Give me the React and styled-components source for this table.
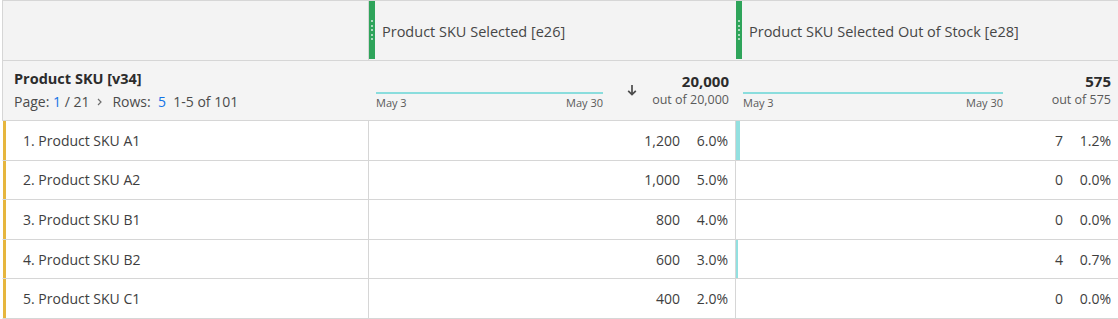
import React from "react";
import styled, { createGlobalStyle } from "styled-components";

const Global = createGlobalStyle`
  html, body { margin: 0; padding: 0; background: #fff; }
  body { font-family: "Open Sans", "Noto Sans", sans-serif; color: #4b4b4b; }
`;

const Table = styled.div`
  width: 1116px;
  margin-left: 2px;
  font-size: 14px;
`;

const Row = styled.div`
  display: grid;
  grid-template-columns: 366px 367px 1fr;
  box-sizing: border-box;
  border-left: 1px solid ${(p) => (p.$data ? "#fff" : "#d6d6d6")};
  border-bottom: 1px solid #d6d6d6;
  border-top: ${(p) => (p.$top ? "1px solid #d6d6d6" : "none")};
  background: ${(p) => p.$bg || "#fff"};
  height: ${(p) => p.$h};
`;

const EmptyHead = styled.div`
  border-right: 1px solid #d6d6d6;
`;

const ColHead = styled.div`
  display: flex;
  align-items: flex-start;
  height: 100%;
`;

const Handle = styled.div`
  width: 6px;
  height: 58px;
  background: #2ea45a;
  display: flex;
  flex-direction: column;
  align-items: center;
  gap: 2.5px;
  padding-top: 19px;
  box-sizing: border-box;
  flex-shrink: 0;
`;

const Dot = styled.span`
  width: 2px;
  height: 2px;
  border-radius: 50%;
  background: rgba(255, 255, 255, 0.8);
`;

const HeadTitle = styled.div`
  padding-left: 7px;
  font-size: 14.5px;
  color: #464646;
  line-height: 20px;
  margin-top: 21px;
`;

const DimCell = styled.div`
  padding: 8px 0 0 11px;
`;

const DimTitle = styled.div`
  font-weight: 700;
  font-size: 14.5px;
  color: #2c2c2c;
  line-height: 20px;
`;

const Pager = styled.div`
  display: flex;
  align-items: center;
  font-size: 14px;
  line-height: 19px;
  margin-top: 3px;
  color: #4b4b4b;
  white-space: pre;
`;

const Blue = styled.span`
  color: #1473e6;
`;

const Chevron = styled.svg`
  margin: 0 10px 0 8px;
`;

const MetricHead = styled.div`
  display: flex;
  align-items: flex-start;
  padding: 0 7px;
`;

const Spark = styled.div`
  width: ${(p) => p.$w}px;
  margin-top: 31px;
  flex-shrink: 0;
`;

const SparkLine = styled.div`
  height: 2px;
  background: #8adddd;
`;

const SparkLabels = styled.div`
  display: flex;
  justify-content: space-between;
  font-size: 11px;
  line-height: 14px;
  margin-top: 2px;
  color: #5a5a5a;
`;

const SortArrow = styled.svg`
  margin: 23px 0 0 24px;
  flex-shrink: 0;
`;

const Totals = styled.div`
  margin-left: auto;
  text-align: right;
  padding-top: 11px;
`;

const TotalNum = styled.div`
  font-weight: 700;
  font-size: 15px;
  line-height: 19px;
  color: #2c2c2c;
`;

const TotalOf = styled.div`
  font-size: 12.5px;
  line-height: 17px;
  color: #5a5a5a;
`;

const NameCell = styled.div`
  border-left: 3px solid #e6b63e;
  border-right: 1px solid #d6d6d6;
  display: flex;
  align-items: center;
  padding-left: 17px;
  font-size: 14px;
  color: #3e3e3e;
`;

const ValueCell = styled.div`
  position: relative;
  display: flex;
  align-items: center;
  justify-content: flex-end;
  padding-right: 7px;
  border-right: ${(p) => (p.$last ? "none" : "1px solid #d6d6d6")};
  font-size: 14px;
  color: #3e3e3e;
`;

const Bar = styled.div`
  position: absolute;
  left: 0;
  top: 0;
  bottom: 0;
  background: #93e0e0;
`;

const Num = styled.span``;

const Pct = styled.span`
  width: 37px;
  margin-left: 11px;
  text-align: right;
`;

const rows = [
  { name: "1. Product SKU A1", a: "1,200", ap: "6.0%", b: "7", bp: "1.2%", bw: 4 },
  { name: "2. Product SKU A2", a: "1,000", ap: "5.0%", b: "0", bp: "0.0%", bw: 0 },
  { name: "3. Product SKU B1", a: "800", ap: "4.0%", b: "0", bp: "0.0%", bw: 0 },
  { name: "4. Product SKU B2", a: "600", ap: "3.0%", b: "4", bp: "0.7%", bw: 2 },
  { name: "5. Product SKU C1", a: "400", ap: "2.0%", b: "0", bp: "0.0%", bw: 0 },
];

const Handlebar = () => (
  <Handle>
    {[0, 1, 2, 3, 4].map((i) => (
      <Dot key={i} />
    ))}
  </Handle>
);

export default function App() {
  return (
    <>
      <Global />
      <Table>
        <Row $top $bg="#f3f3f3" $h="61px">
          <EmptyHead />
          <ColHead>
            <Handlebar />
            <HeadTitle>Product SKU Selected [e26]</HeadTitle>
          </ColHead>
          <ColHead>
            <Handlebar />
            <HeadTitle>Product SKU Selected Out of Stock [e28]</HeadTitle>
          </ColHead>
        </Row>
        <Row $bg="#f4f4f4" $h="60px">
          <DimCell>
            <DimTitle>Product SKU [v34]</DimTitle>
            <Pager>
              {"Page: "}
              <Blue>1</Blue>
              {" / 21"}
              <Chevron width="5" height="8" viewBox="0 0 5 8">
                <path d="M1 1 L4 4 L1 7" fill="none" stroke="#6e6e6e" strokeWidth="1.2" />
              </Chevron>
              {"Rows:  "}
              <Blue>5</Blue>
              {"  1-5 of 101"}
            </Pager>
          </DimCell>
          <MetricHead>
            <Spark $w={227}>
              <SparkLine />
              <SparkLabels>
                <span>May 3</span>
                <span>May 30</span>
              </SparkLabels>
            </Spark>
            <SortArrow width="10" height="12" viewBox="0 0 10 12">
              <path d="M5 1 V10.5 M1.2 6.8 L5 10.6 L8.8 6.8" fill="none" stroke="#4b4b4b" strokeWidth="1.7" />
            </SortArrow>
            <Totals>
              <TotalNum>20,000</TotalNum>
              <TotalOf>out of 20,000</TotalOf>
            </Totals>
          </MetricHead>
          <MetricHead>
            <Spark $w={260}>
              <SparkLine />
              <SparkLabels>
                <span>May 3</span>
                <span>May 30</span>
              </SparkLabels>
            </Spark>
            <Totals>
              <TotalNum>575</TotalNum>
              <TotalOf>out of 575</TotalOf>
            </Totals>
          </MetricHead>
        </Row>
        {rows.map((r) => (
          <Row key={r.name} $data $h="39.6px">
            <NameCell>{r.name}</NameCell>
            <ValueCell>
              <Num>{r.a}</Num>
              <Pct>{r.ap}</Pct>
            </ValueCell>
            <ValueCell $last>
              {r.bw > 0 && <Bar style={{ width: r.bw }} />}
              <Num>{r.b}</Num>
              <Pct>{r.bp}</Pct>
            </ValueCell>
          </Row>
        ))}
      </Table>
    </>
  );
}
